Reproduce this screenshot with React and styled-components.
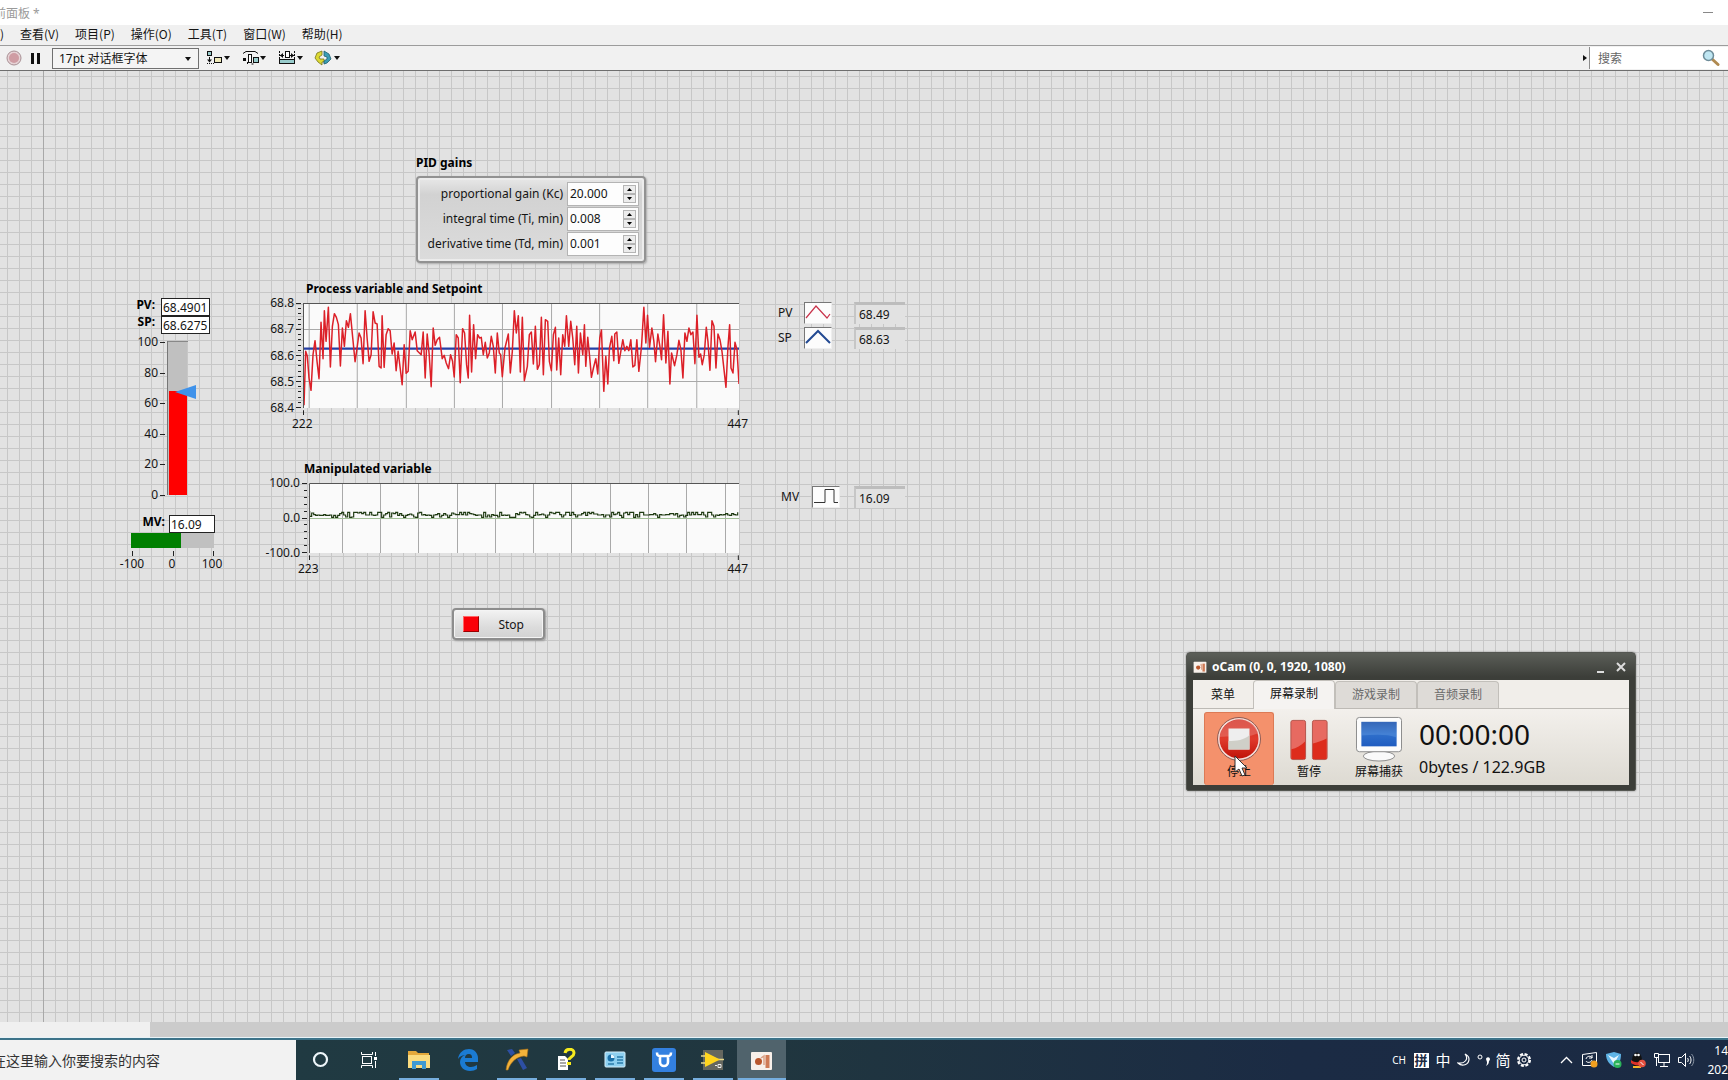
import React from "react";
import styled, { createGlobalStyle, css } from "styled-components";

const Global = createGlobalStyle`
  * { box-sizing: border-box; }
  body {
    margin: 0;
    overflow: hidden;
    font-family: "Noto Sans", "Noto Sans CJK SC", sans-serif;
    font-size: 12px;
    color: #151515;
  }
  button, input, select { font: inherit; color: inherit; margin: 0; }
  button { padding: 0; border: 0; background: none; }
`;

const Screen = styled.div`
  min-height: 100vh;
  display: flex;
  flex-direction: column;
  overflow: hidden;
`;

/* ---------- window chrome ---------- */

const TitleBar = styled.header`
  height: 25px;
  display: flex;
  align-items: center;
  justify-content: space-between;
  background: #fff;
  color: #9a9a9a;
  overflow: hidden;
`;
const TitleText = styled.span`
  margin-left: -6px;
  white-space: pre;
`;
const MinimizeButton = styled.button`
  width: 40px;
  height: 24px;
  display: grid;
  place-items: center;
`;
const MenuBar = styled.nav`
  height: 21px;
  padding-bottom: 3px;
  display: flex;
  align-items: center;
  gap: 16px;
  background: #f0f0f0;
  border-bottom: 1px solid #9c9c9c;
`;
const MenuItem = styled.button`
  font-family: "Noto Sans CJK SC", sans-serif;
  line-height: 18px;
  white-space: nowrap;
`;
const ToolBar = styled.div`
  height: 25px;
  display: flex;
  align-items: center;
  background: #f1f1f1;
  border-bottom: 1px solid #6e6e6e;
`;
const ToolButton = styled.button`
  width: ${(p) => p.$w || 36}px;
  height: 22px;
  display: grid;
  place-items: center;
`;
const FontPicker = styled.div`
  position: relative;
  width: 147px;
  margin: 0 1px 0 8px;
  svg { position: absolute; right: 7px; top: 9px; pointer-events: none; }
`;
const FontSelect = styled.select`
  display: block;
  width: 100%;
  height: 21px;
  padding: 0 6px;
  appearance: none;
  background: #f4f4f4;
  border: 1px solid #707070;
  border-radius: 0;
`;
const SearchBox = styled.div`
  margin-left: auto;
  width: 145px;
  height: 22px;
  display: flex;
  align-items: center;
  background: #fff;
`;
const SearchHandle = styled.span`
  width: 7px;
  height: 22px;
  background: #f1f1f1;
  border-right: 1px solid #8d8d8d;
  display: flex;
  align-items: center;
`;
const SearchInput = styled.input`
  flex: 1;
  min-width: 0;
  height: 20px;
  padding: 0 8px;
  border: 0;
  background: none;
  outline: none;
  &::placeholder { color: #666; opacity: 1; }
`;

/* ---------- front panel ---------- */

const Panel = styled.main`
  flex: 1;
  position: relative;
  padding-top: 82px;
  background:
    linear-gradient(#a8a8a8, #a8a8a8) 43px 0 / 1px 100% no-repeat,
    linear-gradient(90deg, #c7c7c7 1px, transparent 1px) 7px 0 / 12px 12px,
    linear-gradient(#c7c7c7 1px, transparent 1px) 0 5px / 12px 12px,
    #e2e2e2;
`;
const Heading = styled.h2`
  margin: 0;
  height: ${(p) => p.$h || 18}px;
  font-size: 12px;
  line-height: 20px;
  font-weight: 700;
  color: #000;
`;
const GainsGroup = styled.section`
  margin-left: 416px;
  width: 230px;
`;
const GainsBox = styled.div`
  padding: 3px 5px 5px 4px;
  border: 2px solid #929292;
  border-radius: 4px;
  background: linear-gradient(#e8e8e8, #d2d2d2 20%, #dcdcdc);
  box-shadow: inset 0 0 0 2px #ececec, 1px 1px 2px #aaa;
`;
const GainRow = styled.label`
  height: 25px;
  display: flex;
  align-items: center;
  justify-content: flex-end;
  gap: 4px;
`;
const GainField = styled.span`
  width: 72px;
  height: 24px;
  padding-right: 2px;
  display: flex;
  align-items: center;
  background: #fdfdfd;
  border: 1px solid #b4b4b4;
`;
const GainInput = styled.input`
  flex: 1;
  min-width: 0;
  padding: 0 0 0 2px;
  border: 0;
  background: none;
`;
const Spinner = styled.span`
  display: grid;
`;
const SpinButton = styled.button`
  width: 13px;
  height: 9px;
  display: grid;
  place-items: center;
  border: 1px solid #b5b5b5;
  background: #ececec;
`;

const Workspace = styled.div`
  display: flex;
  align-items: flex-start;
  margin-top: 15px;
  padding-left: 112px;
`;
const Gauges = styled.section`
  width: 128px;
  padding-top: 18px;
`;
const ReadoutPair = styled.div`
  display: grid;
  grid-template-columns: 43px 49px;
  column-gap: 6px;
`;
const Names = styled.div`
  display: grid;
  grid-auto-rows: 17px;
  justify-items: end;
  align-content: start;
  font-weight: 700;
  line-height: 17px;
  color: #000;
`;
const Boxes = styled.div`
  display: grid;
  padding-top: 2px;
`;
const Readout = styled.input`
  width: 100%;
  height: 18px;
  padding: 0 1px;
  border: 1px solid #222;
  border-radius: 0;
  background: #fff;
`;
const TankRow = styled.div`
  display: flex;
  height: 167px;
  margin-top: 1px;
`;
const Scale = styled.div`
  width: ${(p) => p.$w}px;
  display: flex;
  flex-direction: column;
  justify-content: space-between;
  align-items: flex-end;
  line-height: 14px;
`;
const Ticks = styled.svg`
  display: block;
  margin: ${(p) => p.$m || "0"};
  flex: none;
`;
const Tank = styled.input`
  writing-mode: vertical-lr;
  direction: rtl;
  appearance: none;
  width: 29px;
  height: 154px;
  margin: 6px 0 0 2px;
  background:
    linear-gradient(#777, #777) 0 0 / 1px 100% no-repeat,
    linear-gradient(#888, #888) 0 0 / 21px 1px no-repeat,
    linear-gradient(#f00, #f00) 2px 100% / 18px 104px no-repeat,
    linear-gradient(#c0c0c0, #c0c0c0) 0 0 / 20px 100% no-repeat;
  &::-webkit-slider-thumb {
    appearance: none;
    width: 21px;
    height: 14px;
    margin-left: 8px;
    background: #3f92ea;
    clip-path: polygon(0 50%, 100% 0, 100% 100%);
  }
`;
const OutputRow = styled.div`
  display: grid;
  grid-template-columns: 53px 46px;
  column-gap: 4px;
  margin-top: 11px;
`;
const OutputBar = styled.div`
  width: 83px;
  height: 15px;
  margin-left: 19px;
  background: #c0c0c0;
`;
const OutputFill = styled.div`
  height: 100%;
  background: #008000;
`;
const OutputScale = styled.div`
  display: grid;
  grid-template-columns: repeat(3, 40px);
  justify-items: center;
  line-height: 14px;
`;

const Charts = styled.section`
  width: 499px;
`;
const ChartBlock = styled.div`
  margin-bottom: 27px;
`;
const ChartTitle = styled(Heading)`
  padding-left: ${(p) => p.$indent}px;
  line-height: 22px;
`;
const ChartBody = styled.div`
  display: flex;
`;
const PlotSvg = styled.svg`
  display: block;
  flex: 1;
  min-width: 0;
  height: ${(p) => p.$h}px;
  margin-top: 7px;
`;
const XLabels = styled.div`
  display: flex;
  justify-content: space-between;
  margin: 2px -9px 0 ${(p) => p.$left}px;
  line-height: 14px;
`;
const StopButton = styled.button`
  width: 93px;
  height: 32px;
  margin: 32px 0 0 212px;
  padding: 0 19px 0 9px;
  display: flex;
  align-items: center;
  justify-content: space-between;
  border: 2px solid #8d8d8d;
  border-radius: 4px;
  background: linear-gradient(#f3f3f3, #dcdcdc 60%, #d2d2d2);
  box-shadow: inset 0 0 0 1px #f4f4f4, 1px 1px 2px #999;
`;
const StopSquare = styled.span`
  width: 16px;
  height: 16px;
  background: #fa0008;
  border: 1px solid;
  border-color: #f66 #900 #900 #f66;
`;
const Legends = styled.section`
  width: 166px;
  padding: 22px 0 0 39px;
`;
const LegendRow = styled.div`
  height: 25px;
  display: flex;
  align-items: center;
  margin-top: ${(p) => (p.$apart ? 134 : 0)}px;
`;
const LegendName = styled.span`
  width: ${(p) => p.$w}px;
  padding-left: ${(p) => p.$pad || 0}px;
`;
const LegendSwatch = styled.svg`
  display: block;
  background: #fcfcfc;
  border: 1px solid;
  border-color: #777 #eee #eee #777;
`;
const LegendValue = styled.output`
  width: 51px;
  height: 22px;
  margin-left: auto;
  padding-left: 3px;
  line-height: 20px;
  border-top: 3px solid #bdbdbd;
  border-left: 2px solid #c6c6c6;
  background: #e2e2e2;
`;

/* ---------- recorder window ---------- */

const Recorder = styled.section`
  position: absolute;
  right: 92px;
  bottom: 231px;
  width: 450px;
  padding: 0 6px 5px;
  border-radius: 4px 4px 2px 2px;
  border: 1px solid #555752;
  background: linear-gradient(#5b5e58, #3c3e39 24px, #3c3e39);
  box-shadow: 0 0 2px #777;
`;
const RecorderTitle = styled.div`
  height: 27px;
  display: flex;
  align-items: center;
  color: #fff;
  font-weight: 700;
  gap: 5px;
`;
const RecorderControls = styled.span`
  margin-left: auto;
  padding-right: 2px;
  display: flex;
  gap: 8px;
`;
const WindowButton = styled.button`
  width: 12px;
  height: 14px;
  display: grid;
  place-items: center;
`;
const Tabs = styled.div`
  height: 29px;
  display: flex;
  align-items: flex-end;
  background: #f1eeea;
  border-bottom: 1px solid #bdbab5;
`;
const Tab = styled.button`
  width: ${(p) => p.$w}px;
  height: 27px;
  padding-bottom: 2px;
  color: #6a6a6a;
  background: #dedbd7;
  border: 1px solid #c2bfba;
  border-bottom: 0;
  border-radius: 4px 4px 0 0;
  ${(p) => p.$plain && css`
    color: #111;
    background: none;
    border-color: transparent;
  `}
  ${(p) => p.$active && css`
    height: 29px;
    padding-bottom: 4px;
    margin-bottom: -1px;
    color: #111;
    background: #f5f3f1;
  `}
`;
const RecorderBody = styled.div`
  height: 76px;
  display: flex;
  padding: 3px 0 0 11px;
  background: linear-gradient(#f3f0ec, #dddad2);
`;
const RecorderAction = styled.button`
  position: relative;
  width: 70px;
  display: flex;
  flex-direction: column;
  align-items: center;
  padding-top: 4px;
  border-radius: 3px;
  line-height: 20px;
  color: #111;
  ${(p) => p.$hot && css`
    background: #f4916c;
    border: 1px solid #dc7a55;
    border-bottom: 0;
    padding-top: 3px;
  `}
`;
const Cursor = styled.svg`
  position: absolute;
  left: 29px;
  top: 42px;
`;
const Meter = styled.div`
  padding: 3px 0 0 5px;
  color: #111;
`;
const Elapsed = styled.div`
  font-size: 28px;
  line-height: 38px;
`;
const Size = styled.div`
  font-size: 16px;
  line-height: 28px;
`;

/* ---------- bottom ---------- */

const ScrollTrack = styled.div`
  height: 16px;
  padding-left: 150px;
  background: #f0f0f0;
  border-bottom: 1px solid #e8f3f8;
`;
const ScrollThumb = styled.div`
  height: 15px;
  background: #cbcbcb;
`;
const TaskBar = styled.footer`
  height: 42px;
  display: flex;
  border-top: 2px solid #3c7389;
  background: linear-gradient(90deg, #203a42 17%, #20363f 45%, #1b2b44 75%, #1b2a43);
  color: #fff;
  overflow: hidden;
`;
const TaskSearch = styled.input`
  width: 296px;
  padding: 0;
  text-indent: -8px;
  border: 0;
  border-radius: 0;
  background: #f2f2f2;
  font-size: 14px;
  &::placeholder { color: #333; opacity: 1; }
`;
const Task = styled.button`
  width: 49px;
  display: grid;
  place-items: center;
  background:
    linear-gradient(#76aede, #76aede) center bottom / ${(p) => (p.$open ? (p.$active ? 48 : 40) : 0)}px 2px no-repeat
    ${(p) => (p.$active ? ", #50636c" : "")};
`;
const Tray = styled.div`
  margin-left: auto;
  display: flex;
  align-items: center;
`;
const TrayButton = styled.button`
  width: ${(p) => p.$w || 24}px;
  height: 24px;
  padding-left: ${(p) => p.$pad || 0}px;
  display: grid;
  place-items: center;
  font-size: ${(p) => p.$fs || 15}px;
  line-height: 20px;
  color: #fff;
`;
const InputBadge = styled.span`
  width: 15px;
  height: 15px;
  background: #fff;
  color: #1b2a43;
  font-size: 13px;
  line-height: 14px;
  text-align: center;
  font-weight: 700;
`;
const Clock = styled.time`
  width: 30px;
  display: grid;
  justify-items: end;
  line-height: 19px;
  font-size: 12px;
`;

/* ---------- data ---------- */

/* process variable trace, in plot units (1306 x 315) */
const PV_TRACE =
  "3,307 8,145 13,160 18,225 24,262 30,155 36,113 42,175 48,227 54,58 60,167 64,23 69,115 76,13 82,192 88,70 94,32 100,43 106,65 112,189 118,75 124,130 130,53 136,73 142,32 149,105 156,176 162,135 168,90 174,105 180,182 186,23 192,105 198,175 204,155 210,26 216,60 222,63 228,190 234,195 237,38 243,193 249,95 255,77 261,83 267,153 273,120 279,203 285,145 291,195 297,245 303,125 309,211 315,205 321,83 327,110 336,87 342,143 354,155 360,87 366,225 372,93 378,155 384,251 390,75 396,127 402,110 409,103 417,167 423,157 429,180 436,197 442,155 448,175 453,222 459,95 465,105 471,239 478,77 484,90 490,185 495,225 499,37 505,207 511,65 517,167 523,95 529,105 534,103 540,155 546,118 552,165 558,150 564,100 570,130 576,210 582,90 588,150 592,155 597,221 605,135 615,93 621,210 627,145 633,23 639,90 645,38 651,207 657,43 663,233 672,190 678,95 684,87 690,183 696,70 702,199 708,185 714,43 720,215 726,50 733,55 738,175 744,203 750,95 756,73 760,201 766,105 772,215 778,95 784,130 789,38 796,130 802,55 808,105 814,185 820,70 825,210 831,90 838,155 843,65 847,190 853,103 858,155 864,223 870,195 877,167 883,213 889,105 894,81 901,265 907,160 913,243 918,135 925,100 931,173 934,93 940,87 946,181 952,145 958,110 964,143 970,130 976,143 982,110 988,192 994,187 1000,110 1006,205 1014,130 1021,13 1027,120 1032,37 1038,133 1045,75 1051,115 1056,176 1063,93 1069,130 1074,170 1080,35 1087,180 1093,85 1099,243 1104,150 1113,188 1120,155 1126,112 1132,140 1138,225 1144,90 1150,115 1156,75 1162,95 1168,87 1174,182 1180,37 1186,163 1191,153 1196,185 1202,155 1208,73 1213,115 1219,202 1225,53 1231,70 1237,195 1243,93 1249,110 1255,145 1267,253 1273,130 1278,65 1282,195 1288,210 1294,118 1300,140 1306,243";

/* controller output is held between samples, so the trace is stepped */
const mvTrace = (() => {
  const levels = [88, 95, 92, 97, 96, 103, 90, 95, 97, 88, 96, 102, 93, 96];
  let seed = 11;
  let x = 2;
  let d = "M2 84 V100";
  while (x < 1283) {
    seed = (seed * 1103 + 12345) % 65521;
    x += 6;
    d += ` H${x} V${levels[seed % levels.length]}`;
  }
  return d;
})();

const GAINS = [
  ["proportional gain (Kc)", "20.000"],
  ["integral time (Ti, min)", "0.008"],
  ["derivative time (Td, min)", "0.001"],
];
const MENUS = [")", "查看(V)", "项目(P)", "操作(O)", "工具(T)", "窗口(W)", "帮助(H)"];

/* ---------- small drawings ---------- */

const Down = ({ x = 0, y = 0 }) => <path d={`M${x} ${y}h6l-3 4z`} fill="#111" />;

const AlignIcon = () => (
  <svg width="24" height="16" viewBox="0 0 24 16">
    <rect x="1.500" y="1.500" width="4" height="4" fill="#9cc" stroke="#111" />
    <path d="M3.500 7v3" stroke="#111" />
    <path d="M1 9.500h5l-2.500 3z" fill="#111" />
    <path d="M1 13.500h7" stroke="#111" strokeDasharray="1 1" />
    <rect x="8.500" y="7.500" width="7" height="5" fill="#eee8b8" stroke="#111" />
    <Down x={18} y={6} />
  </svg>
);
const DistributeIcon = () => (
  <svg width="24" height="16" viewBox="0 0 24 16">
    <path d="M1 3.500l3-2h9l3 2" stroke="#111" fill="none" />
    <path d="M1 8h3v3H1z" fill="#111" />
    <path d="M5.500 12v2M9.500 14h2" stroke="#111" />
    <rect x="6.500" y="4.500" width="3" height="8" fill="#fff" stroke="#111" />
    <rect x="11.500" y="7.500" width="5" height="5" fill="#9cc" stroke="#111" />
    <Down x={18} y={6} />
  </svg>
);
const ResizeIcon = () => (
  <svg width="25" height="16" viewBox="0 0 25 16">
    <path d="M1.500 1v8M16.500 1v8" stroke="#111" strokeDasharray="2 1" />
    <path d="M2 5.500h4M12 5.500h4" stroke="#111" />
    <path d="M2 5.500l3-2.500v5zM16 5.500l-3-2.500v5z" fill="#111" />
    <rect x="7.500" y="1.500" width="4" height="6" fill="#fff" stroke="#111" />
    <rect x="1.500" y="9.500" width="15" height="4" fill="#9cc" stroke="#111" />
    <Down x={19} y={6} />
  </svg>
);
const ReorderIcon = () => (
  <svg width="26" height="16" viewBox="0 0 26 16">
    <path d="M8 1L3 3 1 8l3 4 4 3v-3h2V9H6L5 7l3-2z" fill="#dcd934" stroke="#77751c" strokeWidth=".8" />
    <path d="M10 1l5 3 2 5-4 4-3 1v-3l3-2V7l-3-1z" fill="#3a9db5" stroke="#1f5f70" strokeWidth=".8" />
    <Down x={20} y={6} />
  </svg>
);
const Magnifier = () => (
  <svg width="18" height="18" viewBox="0 0 18 18">
    <path d="M10 10l6 5.500" stroke="#b08a50" strokeWidth="3" strokeLinecap="round" />
    <circle cx="6.500" cy="6.500" r="5" fill="#bfe6f2" stroke="#6d8c99" strokeWidth="1.500" />
  </svg>
);

const yTicks = (majors, minors, span) => {
  const out = [];
  const n = (majors - 1) * minors;
  for (let i = 0; i <= n; i++) {
    const y = Math.round((i * span) / n) + 0.5;
    out.push(`M${i % minors ? 2 : 0} ${y}H${5}`);
  }
  return out.join("");
};

function Chart({ title, indent, axis, labels, minors, height, unit, from, to, children }) {
  return (
    <ChartBlock>
      <ChartTitle $indent={indent}>{title}</ChartTitle>
      <ChartBody>
        <Scale $w={axis - 9}>
          {labels.map((l) => <span key={l}>{l}</span>)}
        </Scale>
        <Ticks width="5" height={height + 1} $m="7px 2px 0 2px">
          <path d={yTicks(labels.length, minors, height - 1)} stroke="#222" />
        </Ticks>
        <PlotSvg $h={height + 7} viewBox={`0 0 ${unit} ${(height + 7) * 3}`} preserveAspectRatio="none" role="img" aria-label={title}>
          <rect width={unit} height={height * 3} fill="#fafafa" />
          {children}
          <path d={`M1.500 ${height * 3}V1.500H${unit}`} fill="none" stroke="#555" strokeWidth="3" />
          <path d={`M1.500 ${height * 3 + 7}v14M${unit - 2} ${height * 3 + 7}v14`} stroke="#222" strokeWidth="3" />
        </PlotSvg>
      </ChartBody>
      <XLabels $left={axis - 11}><span>{from}</span><span>{to}</span></XLabels>
    </ChartBlock>
  );
}

const FolderIcon = () => (
  <svg width="24" height="22" viewBox="0 0 24 22">
    <path d="M1 2h8l2 2h11v15H1z" fill="#e4a93b" />
    <path d="M1 6h22v13H1z" fill="#fbdc7f" />
    <path d="M5 20v-8h14v8h-4v-4H9v4z" fill="#3f9ad2" />
  </svg>
);
const EdgeIcon = () => (
  <svg width="24" height="24" viewBox="0 0 24 24">
    <path d="M2 11C3 4 8 1 13 1c6 0 9 5 9 9v4H9c0 3 3 5 6 5 2 0 4-1 6-2v4c-2 1-4 2-7 2-6 0-10-4-10-9 0-3 2-6 5-7-2 0-5 1-7 4zm7-1h7c0-3-1-4-3-4-3 0-4 2-4 4z" fill="#1b7bd2" />
  </svg>
);
const ArrowIcon = () => (
  <svg width="24" height="24" viewBox="0 0 24 24">
    <path d="M2 2l5-1 3 4-4 3zM12 11l4-1 6 10-4 2z" fill="#2d4fa3" />
    <path d="M1 22C2 12 8 6 15 5l-1-3 9-1-1 8-3-1C12 9 6 13 3 22z" fill="#f3b23a" stroke="#a86f15" strokeWidth=".6" />
  </svg>
);
const HelpIcon = () => (
  <svg width="22" height="24" viewBox="0 0 22 24">
    <path d="M3 8h7l3 3v11H3z" fill="#fff" />
    <path d="M5 12h5M5 15h6M5 18h6" stroke="#555" />
    <path d="M10 5c1-5 9-5 9 0 0 4-5 4-5 7" fill="none" stroke="#f6ea1e" strokeWidth="3" />
    <rect x="12" y="14" width="4" height="3" fill="#f6ea1e" />
  </svg>
);
const CardIcon = () => (
  <svg width="24" height="20" viewBox="0 0 24 20">
    <rect x="2" y="2" width="20" height="15" rx="1" fill="#8ed0f0" stroke="#d5effa" />
    <circle cx="8" cy="8" r="3.500" fill="#1b70a8" /><path d="M8 8V4.500A3.500 3.500 0 0 1 11.500 8z" fill="#e8f7ff" />
    <path d="M14 7h6M14 10h6M14 13h6M5 14h6" stroke="#2b7cab" strokeWidth="1.500" />
  </svg>
);
const CowIcon = () => (
  <svg width="24" height="24" viewBox="0 0 24 24">
    <rect width="24" height="24" rx="3" fill="#3380e0" />
    <path d="M5 4.500c0 3 1 3.500 3.500 3.500h7c2.500 0 3.500-.5 3.500-3.500M8 8v6a4 4 0 0 0 8 0V8" fill="none" stroke="#fff" strokeWidth="2.600" />
  </svg>
);
const LabIcon = () => (
  <svg width="25" height="24" viewBox="0 0 25 24">
    <rect x="3" y="2" width="20" height="20" fill="#65675f" />
    <path d="M1 8h8M1 15h8M17 11.500h7" stroke="#e8d98a" strokeWidth="1.500" />
    <path d="M5 4l15 7.500L5 19z" fill="#ffd51e" />
    <path d="M15 17.500h2M18 16.500h3v3h-3z" fill="none" stroke="#eee" />
  </svg>
);
const OcamIcon = ({ size = 23 }) => (
  <svg width={size} height={size} viewBox="0 0 23 23">
    <rect x="1" y="3" width="21" height="18" rx="1" fill="#f8f0ea" />
    <circle cx="8.500" cy="12.500" r="3.500" fill="#b9562c" />
    <path d="M11 9l3-2v9" fill="none" stroke="#dba288" strokeWidth="1.500" />
    <path d="M17.500 6v13" stroke="#cf7a55" strokeWidth="4" />
  </svg>
);

export default function App() {
  return (
    <Screen>
      <Global />
      <TitleBar>
        <TitleText>前面板 *</TitleText>
        <MinimizeButton aria-label="最小化">
          <svg width="10" height="2"><path d="M0 .5h10" stroke="#888" /></svg>
        </MinimizeButton>
      </TitleBar>
      <MenuBar>
        {MENUS.map((m) => <MenuItem key={m}>{m}</MenuItem>)}
      </MenuBar>
      <ToolBar>
        <ToolButton $w={28} aria-label="中止">
          <svg width="16" height="16"><circle cx="8" cy="8" r="7" fill="#e6d2d5" stroke="#a89095" /><circle cx="8" cy="8" r="5" fill="#cf9ca3" /></svg>
        </ToolButton>
        <ToolButton $w={16} aria-label="暂停">
          <svg width="10" height="11"><path d="M0 0h3v11H0zM6 0h3v11H6z" fill="#111" /></svg>
        </ToolButton>
        <FontPicker>
          <FontSelect aria-label="字体" defaultValue="a"><option value="a">17pt 对话框字体</option></FontSelect>
          <svg width="7" height="5"><Down /></svg>
        </FontPicker>
        <ToolButton aria-label="对齐"><AlignIcon /></ToolButton>
        <ToolButton aria-label="分布"><DistributeIcon /></ToolButton>
        <ToolButton aria-label="调整大小"><ResizeIcon /></ToolButton>
        <ToolButton $w={38} aria-label="重新排序"><ReorderIcon /></ToolButton>
        <SearchBox>
          <SearchHandle><svg width="5" height="6"><path d="M0 0l4 3-4 3z" fill="#111" /></svg></SearchHandle>
          <SearchInput aria-label="搜索" placeholder="搜索" />
          <ToolButton $w={34} aria-label="查找"><Magnifier /></ToolButton>
        </SearchBox>
      </ToolBar>

      <Panel>
        <GainsGroup>
          <Heading $h={23}>PID gains</Heading>
          <GainsBox>
            {GAINS.map(([name, value]) => (
              <GainRow key={name}>
                {name}
                <GainField>
                  <GainInput defaultValue={value} />
                  <Spinner>
                    <SpinButton aria-label="+"><svg width="7" height="3"><path d="M1 3h5L3.500 0z" /></svg></SpinButton>
                    <SpinButton aria-label="-"><svg width="7" height="3"><path d="M1 0h5L3.500 3z" /></svg></SpinButton>
                  </Spinner>
                </GainField>
              </GainRow>
            ))}
          </GainsBox>
        </GainsGroup>

        <Workspace>
          <Gauges>
            <ReadoutPair>
              <Names>
                <label htmlFor="pv">PV:</label>
                <label htmlFor="sp">SP:</label>
              </Names>
              <Boxes>
                <Readout id="pv" defaultValue="68.4901" />
                <Readout id="sp" defaultValue="68.6275" />
              </Boxes>
            </ReadoutPair>
            <TankRow>
              <Scale $w={46}>
                {[100, 80, 60, 40, 20, 0].map((n) => <span key={n}>{n}</span>)}
              </Scale>
              <Ticks width="5" height="155" $m="7px 0 0 2px">
                <path d={yTicks(6, 1, 153)} stroke="#222" />
              </Ticks>
              <Tank type="range" min="0" max="100" step="0.1" defaultValue="68.6" aria-label="SP" />
            </TankRow>
            <OutputRow>
              <Names><label htmlFor="mv">MV:</label></Names>
              <Boxes><Readout id="mv" defaultValue="16.09" /></Boxes>
            </OutputRow>
            <OutputBar><OutputFill style={{ width: "60%" }} /></OutputBar>
            <Ticks width="85" height="6" $m="3px 0 0 19px">
              <path d="M1.500 0v5M42.500 0v5M82.500 0v5" stroke="#222" />
            </Ticks>
            <OutputScale><span>-100</span><span>0</span><span>100</span></OutputScale>
          </Gauges>

          <Charts>
            <Chart title="Process variable and Setpoint" indent={66} axis={63}
              labels={["68.8", "68.7", "68.6", "68.5", "68.4"]} minors={5}
              height={105} unit={1306} from="222" to="447">
              <path d="M18.500 0v315M162.500 0v315M309.500 0v315M453.500 0v315M597.500 0v315M744.500 0v315M888.500 0v315M1032.500 0v315M1179.500 0v315M0 79.500h1306M0 157.500h1306M0 235.500h1306" stroke="#a9a9a9" strokeWidth="3" />
              <path d="M0 137h1306" stroke="#263fa5" strokeWidth="7" />
              <polyline points={PV_TRACE} fill="none" stroke="#dc2028" strokeWidth="4.500" strokeLinejoin="round" />
            </Chart>
            <Chart title="Manipulated variable" indent={64} axis={69}
              labels={["100.0", "0.0", "-100.0"]} minors={5}
              height={70} unit={1290} from="223" to="447">
              <path d="M100.500 0v210M214.500 0v210M328.500 0v210M445.500 0v210M559.500 0v210M673.500 0v210M787.500 0v210M904.500 0v210M1018.500 0v210M1132.500 0v210M1249.500 0v210" stroke="#a9a9a9" strokeWidth="3" />
              <path d="M0 106.500h1290" stroke="#a3bf97" strokeWidth="3" />
              <path d={mvTrace} fill="none" stroke="#1f3a12" strokeWidth="3.500" />
            </Chart>
            <StopButton><StopSquare />Stop</StopButton>
          </Charts>

          <Legends>
            <LegendRow>
              <LegendName $w={26}>PV</LegendName>
              <LegendSwatch width="28" height="22" viewBox="0 0 26 20"><path d="M1 15L11 3l11 12 3-4" fill="none" stroke="#c8324a" strokeWidth="1.200" /></LegendSwatch>
              <LegendValue>68.49</LegendValue>
            </LegendRow>
            <LegendRow>
              <LegendName $w={26}>SP</LegendName>
              <LegendSwatch width="28" height="22" viewBox="0 0 26 20"><path d="M1 15L13 3l12 12" fill="none" stroke="#234a93" strokeWidth="2" /></LegendSwatch>
              <LegendValue>68.63</LegendValue>
            </LegendRow>
            <LegendRow $apart>
              <LegendName $w={34} $pad={3}>MV</LegendName>
              <LegendSwatch width="28" height="22" viewBox="0 0 26 20"><path d="M1 15.500h11v-13h9v13h4" fill="none" stroke="#333" /></LegendSwatch>
              <LegendValue>16.09</LegendValue>
            </LegendRow>
          </Legends>
        </Workspace>

        <Recorder>
          <RecorderTitle>
            <OcamIcon size={14} />
            oCam (0, 0, 1920, 1080)
            <RecorderControls>
              <WindowButton aria-label="最小化"><svg width="8" height="12"><path d="M0 11h7" stroke="#ddd" strokeWidth="2" /></svg></WindowButton>
              <WindowButton aria-label="关闭"><svg width="10" height="10"><path d="M1 1l8 8M9 1L1 9" stroke="#ddd" strokeWidth="2" /></svg></WindowButton>
            </RecorderControls>
          </RecorderTitle>
          <Tabs>
            <Tab $w={60} $plain>菜单</Tab>
            <Tab $w={82} $active>屏幕录制</Tab>
            <Tab $w={82}>游戏录制</Tab>
            <Tab $w={82}>音频录制</Tab>
          </Tabs>
          <RecorderBody>
            <RecorderAction $hot>
              <svg width="46" height="46" viewBox="0 0 46 46">
                <defs><linearGradient id="stopRed" x2="0" y2="1"><stop stopColor="#c92a22" /><stop offset=".5" stopColor="#e03a2c" /><stop offset="1" stopColor="#c01208" /></linearGradient></defs>
                <circle cx="23" cy="23" r="21.500" fill="#f6dcd6" stroke="#8f5a52" />
                <circle cx="23" cy="23" r="19.500" fill="url(#stopRed)" />
                <path d="M4 21c10-2 28 2 38-4C40 8 32 3.500 23 3.500S4 12 4 21z" fill="#e8746a" opacity=".6" />
                <rect x="12.500" y="12.500" width="21" height="21" fill="#eee" />
                <path d="M12.500 25c8 0 16-1 21-6v14.500h-21z" fill="#cfcfc8" />
              </svg>
              停止
              <Cursor width="15" height="22" viewBox="0 0 15 22"><path d="M1 1v16l4-3 3 7 3-1-3-7h5z" fill="#fff" stroke="#333" /></Cursor>
            </RecorderAction>
            <RecorderAction>
              <svg width="46" height="46" viewBox="0 0 46 47">
                <g stroke="#b4554c"><rect x="4.500" y="4.500" width="15" height="40" rx="2" fill="#e76a61" /><rect x="26.500" y="4.500" width="15" height="40" rx="2" fill="#e76a61" /></g>
                <path d="M5 34c5-1 10-4 14-8v18H5zM27 28c5-1 10-3 14-5v21H27z" fill="#dd2c1c" />
              </svg>
              暂停
            </RecorderAction>
            <RecorderAction>
              <svg width="50" height="46" viewBox="0 0 50 47">
                <defs><linearGradient id="screenBlue" x2="0" y2="1"><stop stopColor="#1747a0" /><stop offset=".5" stopColor="#2f6fcb" /><stop offset="1" stopColor="#1f5cc0" /></linearGradient></defs>
                <ellipse cx="25" cy="41" rx="16" ry="5" fill="#fafafa" stroke="#8b8b8b" />
                <rect x="2" y="1.500" width="46" height="35" rx="3" fill="#fcfcfc" stroke="#8b8b8b" />
                <rect x="7" y="6" width="36" height="25" fill="url(#screenBlue)" />
                <path d="M7 20c12-1 26-2 36 2V6H7z" fill="#6ea4e6" opacity=".35" />
              </svg>
              屏幕捕获
            </RecorderAction>
            <Meter>
              <Elapsed>00:00:00</Elapsed>
              <Size>0bytes / 122.9GB</Size>
            </Meter>
          </RecorderBody>
        </Recorder>
      </Panel>

      <ScrollTrack><ScrollThumb /></ScrollTrack>
      <TaskBar>
        <TaskSearch aria-label="搜索" placeholder="在这里输入你要搜索的内容" />
        <Task aria-label="Cortana"><svg width="18" height="18"><circle cx="8.500" cy="8.500" r="6.500" fill="none" stroke="#eef6fa" strokeWidth="2.200" /></svg></Task>
        <Task aria-label="任务视图">
          <svg width="20" height="18" viewBox="0 0 20 18" fill="none" stroke="#fff"><rect x="2.500" y="5.500" width="9" height="7" /><path d="M1.500 1v2.500h11V1M1.500 17v-2.500h11V17M15.500 1v4M15.500 10v7" /><rect x="14.500" y="6.500" width="2" height="2" fill="#fff" /></svg>
        </Task>
        <Task $open aria-label="资源管理器"><FolderIcon /></Task>
        <Task aria-label="Edge"><EdgeIcon /></Task>
        <Task $open aria-label="1"><ArrowIcon /></Task>
        <Task $open aria-label="2"><HelpIcon /></Task>
        <Task $open aria-label="3"><CardIcon /></Task>
        <Task $open aria-label="4"><CowIcon /></Task>
        <Task $open aria-label="LabVIEW"><LabIcon /></Task>
        <Task $open $active aria-label="oCam"><OcamIcon /></Task>
        <Tray>
          <TrayButton $w={22} $fs={10}>CH</TrayButton>
          <TrayButton $w={22}><InputBadge>拼</InputBadge></TrayButton>
          <TrayButton $w={22}>中</TrayButton>
          <TrayButton $w={20} aria-label="半角"><svg width="14" height="14"><path d="M8 1c4 5 0 10-7 9 4 4 11 2 11-4 0-3-2-4-4-5z" fill="none" stroke="#fff" strokeWidth="1.200" /></svg></TrayButton>
          <TrayButton $w={19} aria-label="标点"><svg width="14" height="14"><circle cx="3" cy="4" r="2" fill="none" stroke="#fff" /><path d="M9 6a2 2 0 1 1 3 2c0 2-1 4-3 5 1-2 1-3 1-4z" fill="#fff" /></svg></TrayButton>
          <TrayButton $w={20}>简</TrayButton>
          <TrayButton $w={22} aria-label="设置">
            <svg width="16" height="16" fill="none" stroke="#fff"><circle cx="8" cy="8" r="6" strokeWidth="2" strokeDasharray="3 1.700" /><circle cx="8" cy="8" r="4.800" /><circle cx="8" cy="8" r="2" /></svg>
          </TrayButton>
          <TrayButton $w={43} $pad={19} aria-label="展开"><svg width="13" height="8"><path d="M1 7l5.500-5.500L12 7" fill="none" stroke="#fff" strokeWidth="1.300" /></svg></TrayButton>
          <TrayButton aria-label="同步">
            <svg width="18" height="18" fill="none" stroke="#fff"><path d="M1.500 3.500l14-2v13h-14z" /><path d="M5 8c1-4 6-3 6-1M11 4v3H8M11 9c-1 3-5 3-6 1" /><circle cx="13" cy="13" r="3.500" fill="#f2a020" stroke="none" /></svg>
          </TrayButton>
          <TrayButton aria-label="安全">
            <svg width="18" height="18"><path d="M1 3l8-2 7 2c0 7-2 10-7 13C4 13 1 9 1 3z" fill="#5fb4e6" /><path d="M3 4l6 3 5-3-5 9z" fill="#e9f7ff" /><circle cx="12.500" cy="13" r="4" fill="#2bb35a" /><path d="M10.500 13h4" stroke="#fff" /></svg>
          </TrayButton>
          <TrayButton aria-label="QQ">
            <svg width="18" height="18"><ellipse cx="8" cy="9" rx="5" ry="7.500" fill="#111" /><circle cx="6.500" cy="4" r="1.300" fill="#fff" /><circle cx="9.500" cy="4" r="1.300" fill="#fff" /><path d="M2 9c4 3 8 3 12 0v4c-4 2-8 2-12-1z" fill="#dc3028" /><path d="M4 16h8" stroke="#f5b52b" strokeWidth="2" /><circle cx="13" cy="12.500" r="3.800" fill="#e5503f" /><path d="M11.500 11l3 3" stroke="#fff" /></svg>
          </TrayButton>
          <TrayButton aria-label="网络">
            <svg width="18" height="16" fill="none" stroke="#fff"><rect x="5.500" y="2.500" width="11" height="8" /><path d="M11 11v3M7 14.500h8M1.500 1.500h4v4h-4zM3.500 6v8" /></svg>
          </TrayButton>
          <TrayButton aria-label="音量">
            <svg width="18" height="16" fill="none" stroke="#fff"><path d="M1.500 5.500h3l4-4v13l-4-4h-3zM10.500 6c1 1 1 3 0 4M12.500 4c2 2 2 6 0 8" /><path d="M14.500 2c3 3 3 9 0 12" stroke="#8d97a6" /></svg>
          </TrayButton>
          <Clock><span>14</span><span>202</span></Clock>
        </Tray>
      </TaskBar>
    </Screen>
  );
}
